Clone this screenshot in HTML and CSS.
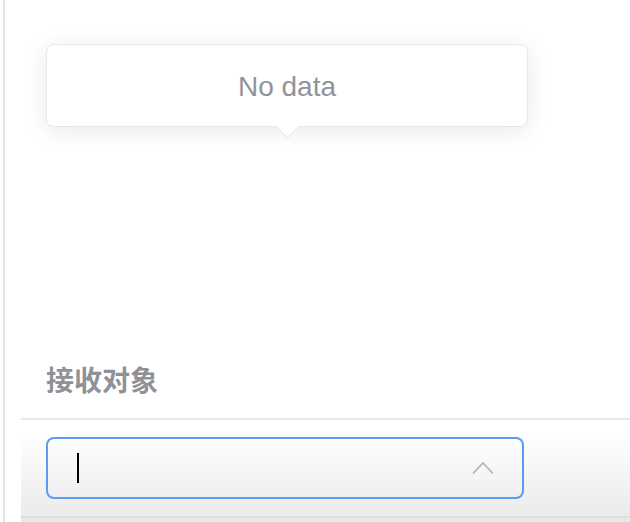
FILE: index.html
```html
<!DOCTYPE html>
<html lang="zh">
<head>
<meta charset="utf-8">
<link rel="stylesheet" href="styles.css">
</head>
<body>
<div class="page">
  <div class="popper">
    <p class="empty">No data</p>
    <span class="arrow"></span>
  </div>
  <div class="label">接收对象</div>
  <div class="row">
    <div class="select">
      <span class="caret"></span>
      <svg class="chevron" width="22" height="14" viewBox="0 0 22 14"><path d="M1 12.5 L11 2 L21 12.5" fill="none" stroke="#aeb1b7" stroke-width="1.6"/></svg>
    </div>
  </div>
  <div class="foot"></div>
</div>
</body>
</html>
```
FILE: styles.css
```css
html, body {
  margin: 0;
  padding: 0;
  background: #fff;
}
.page {
  margin-left: 3px;
  border-left: 2px solid #e3e3e3;
  height: 522px;
  box-sizing: border-box;
  padding-top: 44px;
  display: flex;
  flex-direction: column;
  font-family: "Liberation Sans", Arial, sans-serif;
}
.popper {
  position: relative;
  margin-left: 41px;
  width: 482px;
  height: 83px;
  box-sizing: border-box;
  border: 1px solid #e4e7ed;
  border-radius: 8px;
  background: #fff;
  box-shadow: 0 4px 24px rgba(0, 0, 0, 0.09);
  display: flex;
  align-items: center;
  justify-content: center;
}
.empty {
  margin: 0;
  font-size: 28px;
  color: #909399;
  line-height: 1;
  padding-top: 3px;
}
.arrow {
  position: absolute;
  left: 232px;
  bottom: -9px;
  width: 16px;
  height: 16px;
  background: #fff;
  border-right: 1px solid #e4e7ed;
  border-bottom: 1px solid #e4e7ed;
  transform: rotate(45deg);
}
.label {
  margin-top: 232px;
  margin-left: 41px;
  height: 40px;
  line-height: 40px;
  font-family: "Noto Sans CJK SC", sans-serif;
  font-weight: 700;
  font-size: 28px;
  color: #8f9196;
}
.row {
  margin-top: 19px;
  margin-left: 16px;
  border-top: 2px solid #e6e8ec;
  border-bottom: 2px solid #dcdee2;
  padding: 17px 0 17px 25px;
  background: linear-gradient(#ffffff 15%, #ebebeb);
}
.select {
  position: relative;
  width: 478px;
  height: 62px;
  box-sizing: border-box;
  border: 2px solid #5a9cf5;
  border-radius: 8px;
  display: flex;
  align-items: center;
  justify-content: space-between;
  padding: 0 28px 0 29px;
}
.caret {
  display: block;
  width: 2px;
  height: 30px;
  background: #000;
}
.chevron {
  display: block;
}
.foot {
  flex: 1;
  margin-left: 16px;
  background: #e8e8e8;
}
```
